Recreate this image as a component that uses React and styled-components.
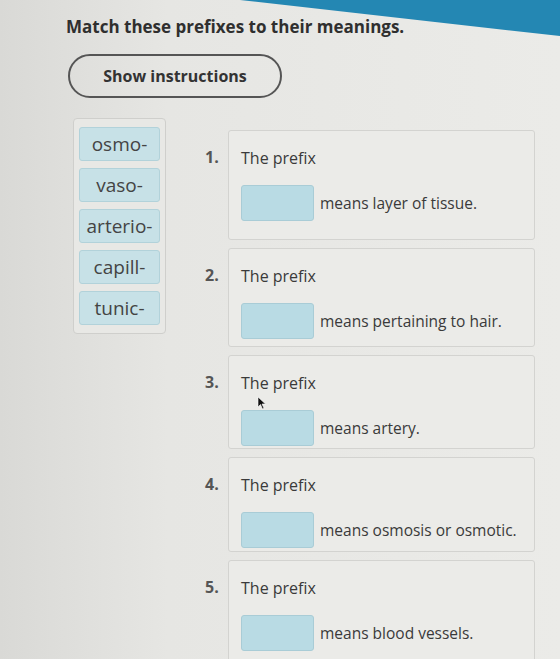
import React from "react";
import styled, { createGlobalStyle } from "styled-components";

const Global = createGlobalStyle`
  html, body { margin: 0; padding: 0; }
  * { box-sizing: border-box; }
  body {
    background: #e6e6e3;
    font-family: "Open Sans", "Noto Sans", sans-serif;
    color: #363636;
  }
`;

const Page = styled.div`
  position: relative;
  width: 560px;
  height: 659px;
  overflow: hidden;
  background: linear-gradient(90deg, #d9d9d6 0%, #e6e6e3 30%, #ebebe8 100%);
`;

const Banner = styled.div`
  position: absolute;
  top: 0;
  left: 0;
  width: 560px;
  height: 38px;
  background: #2487b3;
  clip-path: polygon(240px 0, 560px 0, 560px 36px);
`;

const Main = styled.div`
  position: relative;
  padding: 15px 0 0 66px;
`;

const Title = styled.h1`
  margin: 0;
  font-size: 17px;
  font-weight: 700;
  color: #2f2f2f;
  line-height: 24px;
`;

const InstrButton = styled.button`
  display: block;
  margin-top: 15px;
  margin-left: 2px;
  width: 214px;
  height: 44px;
  border: 2px solid #555;
  border-radius: 22px;
  background: transparent;
  font-family: inherit;
  font-size: 16px;
  font-weight: 700;
  color: #333;
`;

const Content = styled.div`
  display: flex;
  align-items: flex-start;
  margin-top: 20px;
`;

const Bank = styled.div`
  margin-left: 7px;
  width: 93px;
  padding: 8px 5px;
  border: 1px solid #cfcfcc;
  border-radius: 4px;
  background: #e8e8e5;
  display: flex;
  flex-direction: column;
  gap: 7px;
`;

const Tile = styled.div`
  height: 34px;
  border: 1px solid #b2d2da;
  border-radius: 3px;
  background: #c7e1e7;
  display: flex;
  align-items: center;
  justify-content: center;
  font-size: 19px;
  color: #444;
`;

const Questions = styled.div`
  margin-left: 39px;
  margin-top: 12px;
  display: flex;
  flex-direction: column;
  gap: 8px;
`;

const Row = styled.div`
  display: flex;
  align-items: flex-start;
`;

const Num = styled.div`
  width: 23px;
  padding-top: 16px;
  font-size: 16px;
  line-height: 22px;
  font-weight: 700;
  color: #555;
`;

const Card = styled.div`
  width: 307px;
  height: ${(p) => p.$h}px;
  padding: 16px 12px 0 12px;
  border: 1px solid #d3d3d0;
  border-radius: 3px;
  background: #ebebe8;
`;

const Lead = styled.div`
  font-size: 16px;
  line-height: 22px;
  color: #3a3a3a;
`;

const Answer = styled.div`
  margin-top: 16px;
  display: flex;
  align-items: center;
  gap: 6px;
  font-size: 15.5px;
  color: #3a3a3a;
`;

const Drop = styled.div`
  flex: none;
  width: 73px;
  height: 36px;
  border: 1px solid #a9ccd6;
  border-radius: 3px;
  background: #b9dbe4;
`;

const Cursor = styled.svg`
  position: absolute;
  left: 257px;
  top: 396px;
`;

const prefixes = ["osmo-", "vaso-", "arterio-", "capill-", "tunic-"];
const meanings = [
  "layer of tissue.",
  "pertaining to hair.",
  "artery.",
  "osmosis or osmotic.",
  "blood vessels.",
];
const heights = [110, 99, 94, 95, 110];

export default function App() {
  return (
    <>
      <Global />
      <Page>
        <Banner />
        <Main>
          <Title>Match these prefixes to their meanings.</Title>
          <InstrButton>Show instructions</InstrButton>
          <Content>
            <Bank>
              {prefixes.map((p) => (
                <Tile key={p}>{p}</Tile>
              ))}
            </Bank>
            <Questions>
              {meanings.map((m, i) => (
                <Row key={m}>
                  <Num>{i + 1}.</Num>
                  <Card $h={heights[i]}>
                    <Lead>The prefix</Lead>
                    <Answer>
                      <Drop />
                      <span>means {m}</span>
                    </Answer>
                  </Card>
                </Row>
              ))}
            </Questions>
          </Content>
        </Main>
        <Cursor width="10" height="14" viewBox="0 0 10 14">
          <path d="M1 1 L1 11 L3.5 8.5 L5.5 13 L7 12.3 L5 8 L8.5 8 Z" fill="#111" stroke="#fff" strokeWidth="0.6" />
        </Cursor>
      </Page>
    </>
  );
}
